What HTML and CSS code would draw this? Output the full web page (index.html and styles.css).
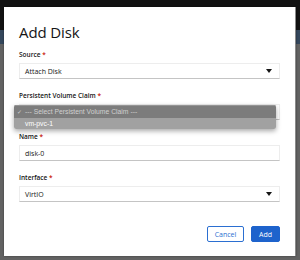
FILE: index.html
```html
<!DOCTYPE html>
<html>
<head>
<meta charset="utf-8">
<link rel="stylesheet" href="styles.css">
</head>
<body>
<div class="backdrop">
  <div class="modal">
    <h1 class="title">Add Disk</h1>
    <div class="form">
      <div class="group">
        <label class="label">Source <span class="req">*</span></label>
        <div class="control select"><span>Attach Disk</span><span class="caret"></span></div>
      </div>
      <div class="group">
        <label class="label">Persistent Volume Claim <span class="req">*</span></label>
        <div class="control select pvc">
          <span></span>
          <div class="popup">
            <div class="opt opt-sel"><span class="check">✓</span>--- Select Persistent Volume Claim ---</div>
            <div class="opt opt-hi">vm-pvc-1</div>
          </div>
        </div>
      </div>
      <div class="group">
        <label class="label">Name <span class="req">*</span></label>
        <div class="control"><span>disk-0</span></div>
      </div>
      <div class="group">
        <label class="label">Interface <span class="req">*</span></label>
        <div class="control select"><span>VirtIO</span><span class="caret"></span></div>
      </div>
    </div>
    <div class="footer">
      <button class="btn btn-secondary">Cancel</button>
      <button class="btn btn-primary">Add</button>
    </div>
  </div>
</div>
</body>
</html>
```

FILE: styles.css
```css
html, body {
  margin: 0;
  padding: 0;
}
body {
  width: 300px;
  height: 260px;
  overflow: hidden;
  background: #5f5f5f;
  font-family: "Open Sans", "Liberation Sans", sans-serif;
}
.backdrop {
  width: 300px;
  height: 260px;
  padding-top: 7px;
  box-sizing: border-box;
  background: linear-gradient(to bottom, #121212 0, #121212 30px, #34475c 30px, #34475c 44px, #626262 44px);
}
.modal {
  margin-left: 4px;
  width: 292px;
  height: 249px;
  box-sizing: border-box;
  background: #fff;
  padding: 16px 15px 0 15px;
  border-right: 1px solid #8a8a8a;
  box-shadow: 0 0 2px rgba(0,0,0,0.4);
}
.title {
  margin: 0;
  font-size: 15px;
  line-height: 18px;
  font-weight: 400;
  color: #151515;
  letter-spacing: -0.1px;
}
.form {
  margin-top: 9px;
  display: flex;
  flex-direction: column;
  gap: 12px;
}
.group {
  display: flex;
  flex-direction: column;
  gap: 4px;
}
.label {
  font-size: 6.5px;
  line-height: 9px;
  font-weight: 600;
  color: #151515;
}
.req {
  color: #c9190b;
}
.control {
  position: relative;
  height: 16px;
  box-sizing: border-box;
  border: 1px solid #ededed;
  border-bottom-color: #c4c4c4;
  display: flex;
  align-items: center;
  justify-content: space-between;
  padding: 0 5px 0 5px;
  font-size: 7px;
  color: #151515;
}
.caret {
  width: 0;
  height: 0;
  border-left: 3px solid transparent;
  border-right: 3px solid transparent;
  border-top: 4px solid #151515;
  margin-right: 2px;
}
.popup {
  position: absolute;
  left: -6px;
  top: 0px;
  width: 262px;
  height: 24px;
  border-radius: 2px;
  overflow: hidden;
  box-shadow: 0 2px 5px rgba(0,0,0,0.35);
  display: flex;
  flex-direction: column;
  font-family: "Liberation Sans", sans-serif;
  font-size: 6.8px;
}
.opt {
  flex: 1;
  display: flex;
  align-items: center;
  padding-left: 11px;
}
.opt-sel {
  background: #7c7c7c;
  color: #cfcfcf;
  position: relative;
  border-top: 1px solid #959595;
}
.check {
  position: absolute;
  left: 3px;
  font-size: 6px;
}
.opt-hi {
  background: #a1a1a1;
  color: #fff;
}
.footer {
  margin-top: 24px;
  display: flex;
  justify-content: flex-end;
  gap: 7px;
}
.btn {
  height: 16px;
  font-family: "Open Sans", "Liberation Sans", sans-serif;
  font-size: 7px;
  border-radius: 2px;
  padding: 0;
  cursor: pointer;
}
.btn-secondary {
  width: 37px;
  background: #fff;
  color: #2b6fd1;
  border: 1px solid #2b6fd1;
}
.btn-primary {
  width: 29px;
  background: #1e63cc;
  color: #fff;
  border: 1px solid #1e63cc;
}
```
